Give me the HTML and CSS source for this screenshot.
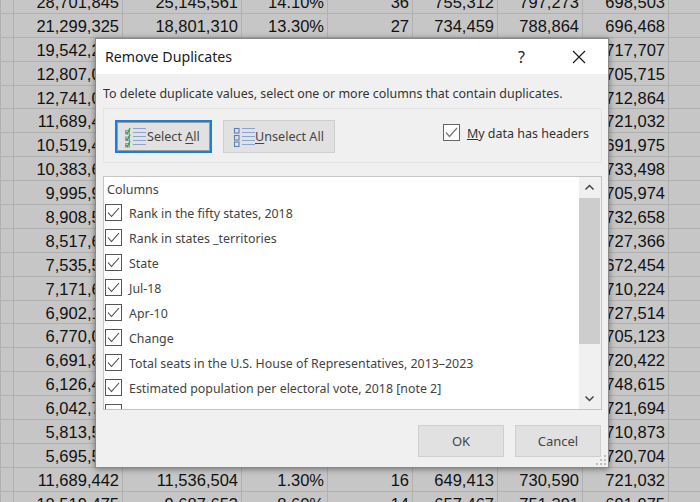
FILE: index.html
```html
<!DOCTYPE html>
<html lang="en">
<head>
<meta charset="utf-8">
<title>Remove Duplicates</title>
<link rel="stylesheet" href="styles.css">
</head>
<body>
<table class="sheet">
<colgroup><col class="c0"><col class="c1"><col class="c2"><col class="c3"><col class="c4"><col class="c5"><col class="c6"><col class="c7"><col class="c8"></colgroup>
<tbody>
<tr><td></td><td>28,701,845</td><td>25,145,561</td><td>14.10%</td><td>36</td><td>755,312</td><td>797,273</td><td>698,503</td><td></td></tr>
<tr><td></td><td>21,299,325</td><td>18,801,310</td><td>13.30%</td><td>27</td><td>734,459</td><td>788,864</td><td>696,468</td><td></td></tr>
<tr><td></td><td>19,542,209</td><td></td><td></td><td></td><td></td><td></td><td>717,707</td><td></td></tr>
<tr><td></td><td>12,807,060</td><td></td><td></td><td></td><td></td><td></td><td>705,715</td><td></td></tr>
<tr><td></td><td>12,741,080</td><td></td><td></td><td></td><td></td><td></td><td>712,864</td><td></td></tr>
<tr><td></td><td>11,689,442</td><td></td><td></td><td></td><td></td><td></td><td>721,032</td><td></td></tr>
<tr><td></td><td>10,519,475</td><td></td><td></td><td></td><td></td><td></td><td>691,975</td><td></td></tr>
<tr><td></td><td>10,383,620</td><td></td><td></td><td></td><td></td><td></td><td>733,498</td><td></td></tr>
<tr><td></td><td>9,995,915</td><td></td><td></td><td></td><td></td><td></td><td>705,974</td><td></td></tr>
<tr><td></td><td>8,908,520</td><td></td><td></td><td></td><td></td><td></td><td>732,658</td><td></td></tr>
<tr><td></td><td>8,517,685</td><td></td><td></td><td></td><td></td><td></td><td>727,366</td><td></td></tr>
<tr><td></td><td>7,535,591</td><td></td><td></td><td></td><td></td><td></td><td>672,454</td><td></td></tr>
<tr><td></td><td>7,171,646</td><td></td><td></td><td></td><td></td><td></td><td>710,224</td><td></td></tr>
<tr><td></td><td>6,902,149</td><td></td><td></td><td></td><td></td><td></td><td>727,514</td><td></td></tr>
<tr><td></td><td>6,770,010</td><td></td><td></td><td></td><td></td><td></td><td>705,123</td><td></td></tr>
<tr><td></td><td>6,691,878</td><td></td><td></td><td></td><td></td><td></td><td>720,422</td><td></td></tr>
<tr><td></td><td>6,126,452</td><td></td><td></td><td></td><td></td><td></td><td>748,615</td><td></td></tr>
<tr><td></td><td>6,042,718</td><td></td><td></td><td></td><td></td><td></td><td>721,694</td><td></td></tr>
<tr><td></td><td>5,813,568</td><td></td><td></td><td></td><td></td><td></td><td>710,873</td><td></td></tr>
<tr><td></td><td>5,695,564</td><td></td><td></td><td></td><td></td><td></td><td>720,704</td><td></td></tr>
<tr><td></td><td>11,689,442</td><td>11,536,504</td><td>1.30%</td><td>16</td><td>649,413</td><td>730,590</td><td>721,032</td><td></td></tr>
<tr><td></td><td>10,519,475</td><td>9,687,653</td><td>8.60%</td><td>14</td><td>657,467</td><td>751,391</td><td>691,975</td><td></td></tr>
</tbody>
</table>

<section class="dialog">
  <header class="titlebar">
    <h1 class="title">Remove Duplicates</h1>
    <span class="help">?</span>
    <svg class="close" width="14" height="14" viewBox="0 0 14 14"><path d="M1 1 13 13M13 1 1 13" stroke="#1a1a1a" stroke-width="1.2" fill="none"/></svg>
  </header>
  <div class="body">
    <p class="intro">To delete duplicate values, select one or more columns that contain duplicates.</p>
    <div class="group">
      <button class="btn tool focus">
        <svg width="22" height="22" viewBox="0 0 22 22">
          <g fill="none" stroke="#7f9cc6" stroke-width="1">
            <rect x="0.500" y="4.500" width="4" height="3.500"/><rect x="0.500" y="11" width="4" height="3.500"/><rect x="0.500" y="17.500" width="4" height="3.500"/>
          </g>
          <g fill="none" stroke="#2f9e3a" stroke-width="1.300">
            <path d="M1 6 2.500 7.500 5 2"/><path d="M1 12.500 2.500 14 5 8.500"/><path d="M1 19 2.500 20.500 5 15"/>
          </g>
          <path d="M8 2.500H21M8 6.500H21M8 10.500H21M8 14.500H21M8 18.500H21" stroke="#8aa4cb" stroke-width="1.100"/>
        </svg>
        <span>Select <u>A</u>ll</span>
      </button>
      <button class="btn tool unselect">
        <svg width="22" height="22" viewBox="0 0 22 22">
          <g fill="none" stroke="#5b7fb5" stroke-width="1.100">
            <rect x="1.500" y="2.500" width="4.500" height="4.500"/><rect x="1.500" y="9.500" width="4.500" height="4.500"/><rect x="1.500" y="16" width="4.500" height="4.500"/>
          </g>
          <path d="M9 2.500H22M9 6.500H22M9 10.500H22M9 14.500H22M9 18.500H22" stroke="#8aa4cb" stroke-width="1.100"/>
        </svg>
        <span><u>U</u>nselect All</span>
      </button>
      <label class="headers"><span class="check"><svg class="tick" width="13" height="11" viewBox="0 0 13 11"><path d="M1 5.500 4.500 9.500 12 1" fill="none" stroke="#777" stroke-width="1.200"/></svg></span><span class="headers-text"><u>M</u>y data has headers</span></label>
    </div>
    <div class="list">
      <div class="list-main">
        <div class="list-head">Columns</div>
        <ul class="items">
          <li class="item"><span class="check"><svg class="tick" width="13" height="11" viewBox="0 0 13 11"><path d="M1 5.500 4.500 9.500 12 1" fill="none" stroke="#444" stroke-width="1.100"/></svg></span><span class="label">Rank in the fifty states, 2018</span></li>
          <li class="item"><span class="check"><svg class="tick" width="13" height="11" viewBox="0 0 13 11"><path d="M1 5.500 4.500 9.500 12 1" fill="none" stroke="#444" stroke-width="1.100"/></svg></span><span class="label">Rank in states _territories</span></li>
          <li class="item"><span class="check"><svg class="tick" width="13" height="11" viewBox="0 0 13 11"><path d="M1 5.500 4.500 9.500 12 1" fill="none" stroke="#444" stroke-width="1.100"/></svg></span><span class="label">State</span></li>
          <li class="item"><span class="check"><svg class="tick" width="13" height="11" viewBox="0 0 13 11"><path d="M1 5.500 4.500 9.500 12 1" fill="none" stroke="#444" stroke-width="1.100"/></svg></span><span class="label">Jul-18</span></li>
          <li class="item"><span class="check"><svg class="tick" width="13" height="11" viewBox="0 0 13 11"><path d="M1 5.500 4.500 9.500 12 1" fill="none" stroke="#444" stroke-width="1.100"/></svg></span><span class="label">Apr-10</span></li>
          <li class="item"><span class="check"><svg class="tick" width="13" height="11" viewBox="0 0 13 11"><path d="M1 5.500 4.500 9.500 12 1" fill="none" stroke="#444" stroke-width="1.100"/></svg></span><span class="label">Change</span></li>
          <li class="item"><span class="check"><svg class="tick" width="13" height="11" viewBox="0 0 13 11"><path d="M1 5.500 4.500 9.500 12 1" fill="none" stroke="#444" stroke-width="1.100"/></svg></span><span class="label">Total seats in the U.S. House of Representatives, 2013–2023</span></li>
          <li class="item"><span class="check"><svg class="tick" width="13" height="11" viewBox="0 0 13 11"><path d="M1 5.500 4.500 9.500 12 1" fill="none" stroke="#444" stroke-width="1.100"/></svg></span><span class="label">Estimated population per electoral vote, 2018 [note 2]</span></li>
          <li class="item"><span class="check"></span></li>
        </ul>
      </div>
      <div class="scrollbar">
        <svg class="arrow" width="21" height="21" viewBox="0 0 21 21"><path d="M6.500 12.500 10.500 8.500 14.500 12.500" fill="none" stroke="#444" stroke-width="1.500"/></svg>
        <div class="track"><div class="thumb"></div></div>
        <svg class="arrow" width="21" height="21" viewBox="0 0 21 21"><path d="M6.500 8.500 10.500 12.500 14.500 8.500" fill="none" stroke="#444" stroke-width="1.500"/></svg>
      </div>
    </div>
    <div class="actions">
      <button class="btn action">OK</button>
      <button class="btn action">Cancel</button>
    </div>
  </div>
  <svg class="grip" width="11" height="11" viewBox="0 0 11 11"><g fill="#bdbdbd"><rect x="8" y="0" width="2" height="2"/><rect x="4" y="4" width="2" height="2"/><rect x="8" y="4" width="2" height="2"/><rect x="0" y="8" width="2" height="2"/><rect x="4" y="8" width="2" height="2"/><rect x="8" y="8" width="2" height="2"/></g></svg>
</section>
</body>
</html>
```
FILE: styles.css
```css
* { box-sizing: border-box; }
html, body { margin: 0; height: 100%; }
body {
  position: relative;
  width: 700px;
  height: 502px;
  overflow: hidden;
  background: #c6c6c6;
}
.sheet {
  margin-top: -11px;
  border-collapse: collapse;
  table-layout: fixed;
  width: 720px;
  font-family: "Liberation Sans", Arial, sans-serif;
  font-size: 16.5px;
  color: #111;
}
.c0 { width: 13px; }
.c1 { width: 109px; }
.c2 { width: 119px; }
.c3 { width: 86px; }
.c4 { width: 85px; }
.c5 { width: 85px; }
.c6 { width: 85px; }
.c7 { width: 86px; }
.c8 { width: 52px; }
.sheet td {
  height: 23.9px;
  padding: 1px 3px 0 0;
  text-align: right;
  white-space: nowrap;
  overflow: hidden;
  border: 1px solid #b0b0b0;
  line-height: 20px;
}
.dialog {
  position: absolute;
  left: 95px;
  top: 38px;
  width: 514px;
  height: 430px;
  display: flex;
  flex-direction: column;
  background: #f0f0f0;
  border: 1px solid #8a8a8a;
  box-shadow: 0 1px 6px rgba(0, 0, 0, .45);
  font-family: "Noto Sans", "Open Sans", sans-serif;
  color: #333;
}
.titlebar {
  display: flex;
  align-items: center;
  height: 35px;
  padding: 0 22px 0 9px;
  background: #fff;
  flex: none;
}
.title {
  flex: 1;
  margin: 0;
  font-size: 14.2px;
  font-weight: 400;
  color: #1a1a1a;
}
.help { font-size: 16px; color: #222; margin-right: 47px; }
.body {
  flex: 1;
  display: flex;
  flex-direction: column;
  padding: 0 6px 9px 7px;
}
.intro {
  margin: 10px 0 0;
  height: 24px;
  font-size: 12.45px;
  line-height: 20px;
  white-space: nowrap;
}
.group {
  display: flex;
  align-items: flex-start;
  height: 55px;
  padding: 11px 12px 0 11px;
  border: 1px solid #e4e4e4;
  flex: none;
}
.btn {
  font: inherit;
  color: #444;
  background: #e1e1e1;
  border: 1px solid #cfcfcf;
  padding: 0;
}
.tool {
  display: flex;
  align-items: center;
  height: 33px;
  font-size: 12.6px;
}
.tool svg { flex: none; }
.tool.focus {
  width: 97px;
  padding-left: 8px;
  border: 2px solid #1a7fd6;
  box-shadow: inset 0 0 0 1px #9a9a9a;
}
.unselect {
  width: 112px;
  margin-left: 11px;
  padding-left: 9px;
}
.tool u { text-decoration-thickness: 1px; text-underline-offset: 2px; }
.headers {
  display: flex;
  align-items: center;
  margin-left: auto;
  margin-top: 3px;
  font-size: 12.5px;
}
.headers-text { margin-left: 7px; margin-top: 2px; }
.headers .check { border-color: #666; }
.check {
  display: flex;
  align-items: center;
  justify-content: center;
  flex: none;
  width: 17px;
  height: 17px;
  background: #fff;
  border: 1.500px solid #555;
}
.list {
  display: flex;
  height: 234px;
  margin-top: 13px;
  background: #fff;
  border: 1px solid #c4c4c4;
  flex: none;
  overflow: hidden;
}
.list-main { flex: 1; min-width: 0; overflow: hidden; padding-left: 1px; }
.list-head {
  height: 23px;
  padding: 4px 0 0 2px;
  font-size: 12.5px;
  line-height: 18px;
  color: #444;
}
.items { list-style: none; margin: 0; padding: 0; }
.item {
  display: flex;
  align-items: center;
  gap: 7px;
  height: 25px;
  font-size: 12.38px;
  white-space: nowrap;
  color: #444;
}
.label { margin-top: 2px; }
.scrollbar {
  display: flex;
  flex-direction: column;
  width: 22px;
  background: #f0f0f0;
  flex: none;
}
.arrow { flex: none; }
.track { flex: 1; padding-right: 1px; }
.thumb { height: 146px; background: #cdcdcd; }
.actions {
  display: flex;
  justify-content: flex-end;
  gap: 11px;
  margin-top: 15px;
  padding-right: 1px;
}
.action {
  width: 86px;
  height: 32px;
  font-size: 13px;
}
.grip {
  position: absolute;
  right: 1px;
  bottom: 1px;
}
```
